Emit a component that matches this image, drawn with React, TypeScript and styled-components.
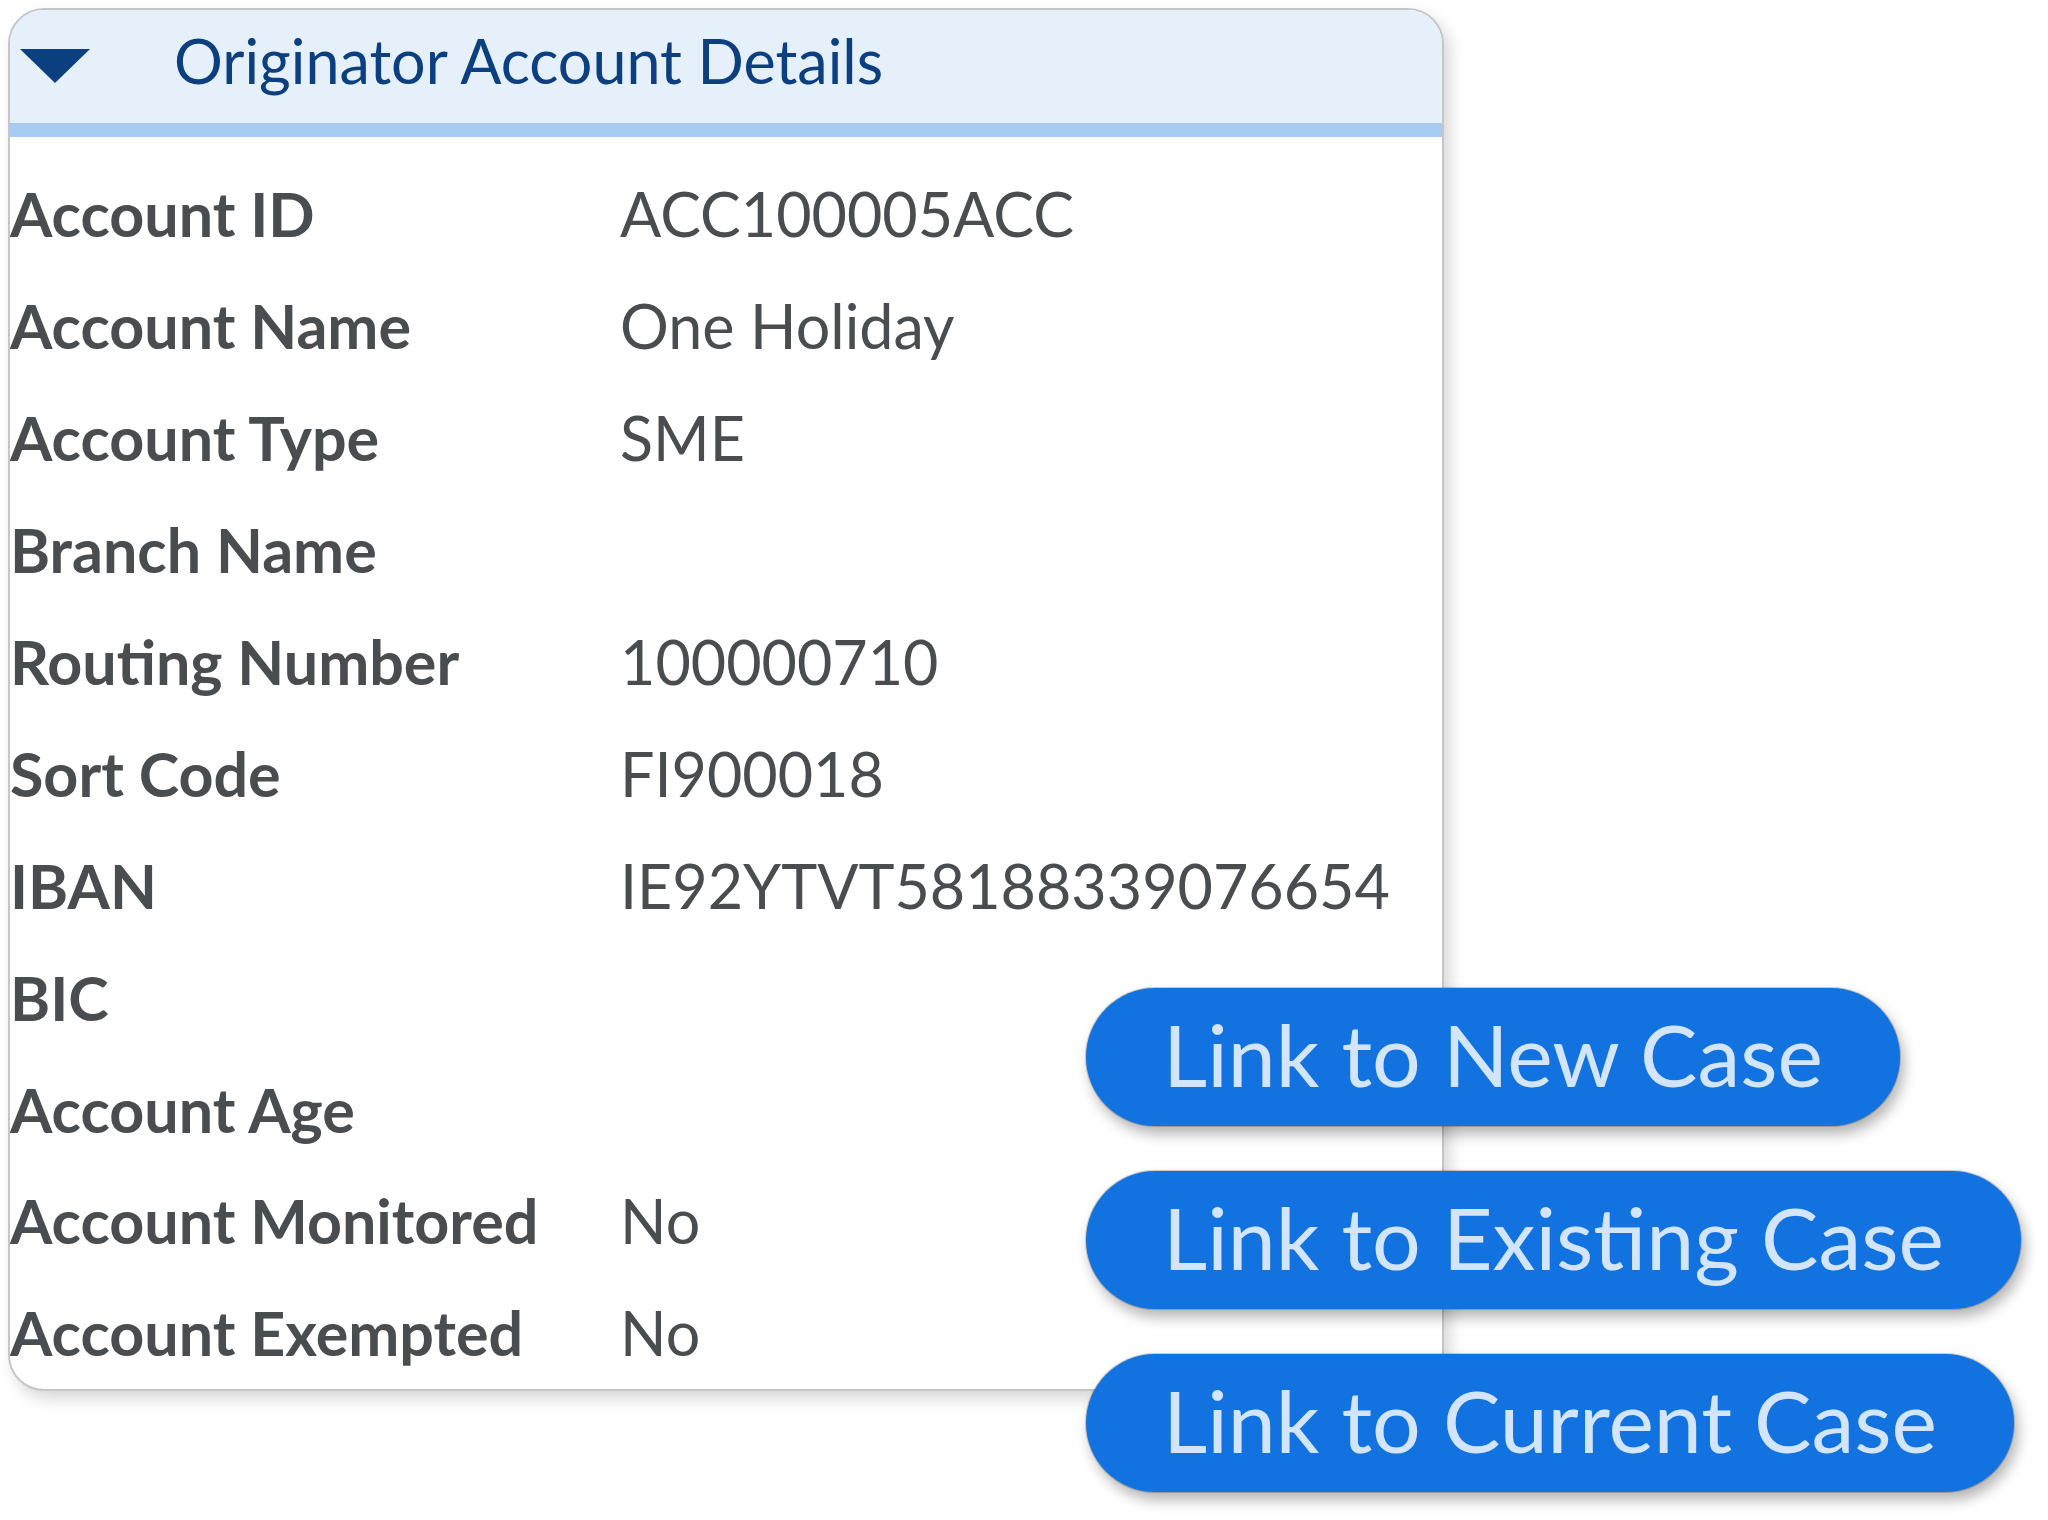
import styled, { createGlobalStyle } from "styled-components";

const GlobalStyle = createGlobalStyle`
  html, body {
    margin: 0;
    padding: 0;
    background: #ffffff;
  }
  body {
    font-family: Lato, "Open Sans", sans-serif;
  }
`;

const Page = styled.div`
  position: relative;
  width: 2048px;
  height: 1520px;
  padding: 8px 0 0 8px;
  box-sizing: border-box;
`;

const Card = styled.section`
  width: 1436px;
  border: 2px solid #c6c6c6;
  border-radius: 36px;
  overflow: hidden;
  background: #ffffff;
  box-shadow: 6px 8px 16px rgba(0, 0, 0, 0.16);
  box-sizing: border-box;
`;

const Header = styled.div`
  display: flex;
  align-items: center;
  height: 127px;
  background: #e6f0fb;
  border-bottom: 14px solid #a8cbf4;
  padding-left: 10px;
  box-sizing: border-box;
`;

const Caret = styled.span`
  display: block;
  width: 0;
  height: 0;
  border-left: 35px solid transparent;
  border-right: 35px solid transparent;
  border-top: 34px solid #0b3f7f;
  margin-right: 84px;
  margin-top: -2px;
`;

const Title = styled.h2`
  margin: 0 0 12px;
  font-size: 61px;
  font-weight: 400;
  color: #0b3f7f;
  line-height: 1;
`;

const Rows = styled.div`
  padding-top: 21px;
`;

const Row = styled.div`
  display: grid;
  grid-template-columns: 610px 1fr;
  align-items: center;
  height: 111.9px;
  font-size: 61px;
  color: #4a4d4f;
`;

const Label = styled.span`
  font-weight: 700;
`;

const Value = styled.span`
  font-weight: 400;
`;

const Actions = styled.div`
  position: absolute;
  left: 1086px;
  top: 988px;
  display: flex;
  flex-direction: column;
  align-items: flex-start;
  gap: 45px;
`;

const ActionButton = styled.button`
  height: 138px;
  padding: 0 77px 8px;
  border: none;
  border-radius: 69px;
  background: #1273e0;
  color: #d3e5fc;
  font-family: Lato, "Open Sans", sans-serif;
  font-size: 86px;
  font-weight: 400;
  white-space: nowrap;
  cursor: pointer;
  box-shadow: 0 0 0 1px rgba(0, 0, 0, 0.18), 4px 8px 14px rgba(0, 0, 0, 0.3);
`;

const details: [string, string][] = [
  ["Account ID", "ACC100005ACC"],
  ["Account Name", "One Holiday"],
  ["Account Type", "SME"],
  ["Branch Name", ""],
  ["Routing Number", "100000710"],
  ["Sort Code", "FI900018"],
  ["IBAN", "IE92YTVT58188339076654"],
  ["BIC", ""],
  ["Account Age", ""],
  ["Account Monitored", "No"],
  ["Account Exempted", "No"],
];

const actions = ["Link to New Case", "Link to Existing Case", "Link to Current Case"];

const App = () => {
  return (
    <>
      <GlobalStyle />
      <Page>
        <Card>
          <Header>
            <Caret />
            <Title>Originator Account Details</Title>
          </Header>
          <Rows>
            {details.map(([label, value]) => (
              <Row key={label}>
                <Label>{label}</Label>
                <Value>{value}</Value>
              </Row>
            ))}
          </Rows>
        </Card>
        <Actions>
          {actions.map((a) => (
            <ActionButton key={a}>{a}</ActionButton>
          ))}
        </Actions>
      </Page>
    </>
  );
};

export default App;
